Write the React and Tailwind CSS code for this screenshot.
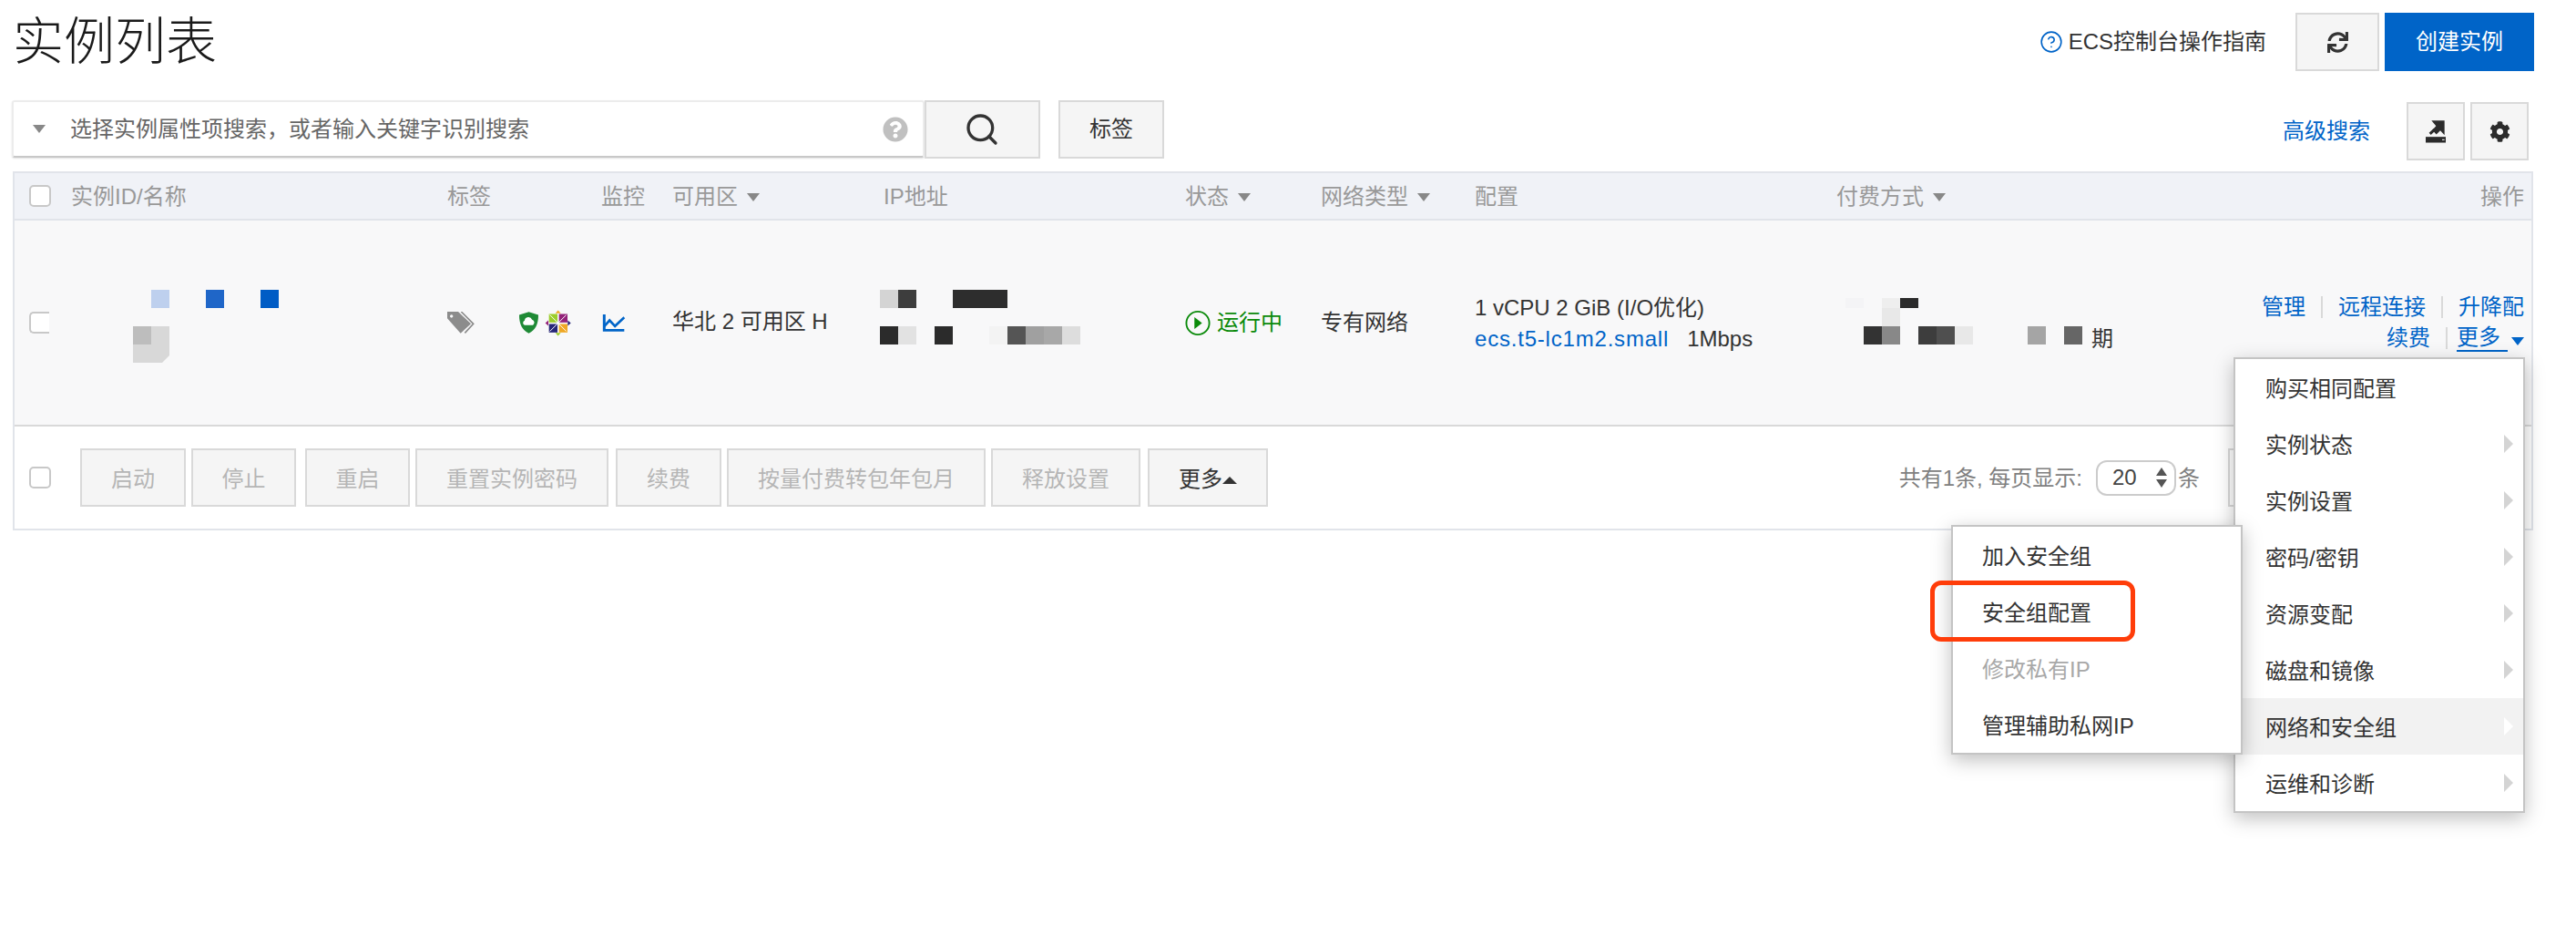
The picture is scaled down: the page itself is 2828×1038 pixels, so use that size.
import React from "react";
import { FaSync, FaCog, FaQuestionCircle } from "react-icons/fa";
import { CircleHelp, Search } from "lucide-react";

const COLS = "grid grid-cols-[62px_413px_169px_78px_232px_331px_149px_169px_397px_1fr_auto] pr-2";

const Down = ({ cls = "border-t-[#888]" }) => (
  <span className={`inline-block w-0 h-0 border-x-[7px] border-x-transparent border-t-[9px] ${cls}`} />
);

const Head = ({ children, sort }) => (
  <div className="flex items-center gap-[10px] pt-[2px] text-[#999]">
    <span>{children}</span>
    {sort && <Down />}
  </div>
);

const Mosaic = ({ rows, cell = "w-5" }) => (
  <div className="flex flex-col">
    {rows.map((r, i) => (
      <div key={i} className={`flex ${r.h || "h-5"}`}>
        {r.c.map((c, j) => (
          <div key={j} className={`${cell} h-full ${c}`} />
        ))}
      </div>
    ))}
  </div>
);

const Btn = ({ children, cls = "", text = "text-[#b5b5b5]" }) => (
  <div className={`h-16 flex items-center justify-center border-2 border-[#d9d9d9] bg-[#f5f5f5] ${text} ${cls}`}>
    {children}
  </div>
);

const Arrow = ({ cls = "border-l-[#d4d4d4]" }) => (
  <span className={`w-0 h-0 border-y-[10px] border-y-transparent border-l-[10px] ${cls}`} />
);

const MenuItem = ({ label, arrow, active, muted, pad = "pl-[33px]" }) => (
  <div className={`h-[62px] flex items-center justify-between ${pad} pr-[11px] ${active ? "bg-[#f2f2f2]" : ""} ${muted ? "text-[#a8a8a8]" : "text-[#333]"}`}>
    <span className="pt-[3px]">{label}</span>
    {arrow && <Arrow cls={active ? "border-l-white" : "border-l-[#d4d4d4]"} />}
  </div>
);

const TagIcon = () => (
  <svg viewBox="30 150 90 72" className="w-[30px] h-6">
    <path fillRule="evenodd" d="M30 150H66L108 190L74 221L30 172ZM44 160a5 5 0 1 0 .1 0Z" fill="#8c8c8c" />
    <path d="M76 150L116 190L88 220" fill="none" stroke="#8c8c8c" strokeWidth="5" />
  </svg>
);

const ShieldIcon = () => (
  <svg viewBox="265 145 70 78" className="w-[23px] h-[26px]">
    <path d="M300 148L332 158C332 190 322 208 300 220C278 208 268 190 268 158Z" fill="#1f8a36" />
    <path d="M286 192a8 8 0 0 1 0-15a13 13 0 0 1 25-3a10 10 0 0 1 3 18Z" fill="#fff" />
  </svg>
);

const CentosIcon = () => (
  <svg viewBox="355 140 90 86" className="w-[30px] h-[29px]">
    <rect x="369" y="153" width="28" height="28" fill="#9ccd2a" />
    <rect x="402" y="153" width="28" height="28" fill="#932279" />
    <rect x="369" y="186" width="28" height="28" fill="#262577" />
    <rect x="402" y="186" width="28" height="28" fill="#efa724" />
    <path d="M399 141L408 151H390Z" fill="#efa724" />
    <path d="M399 225L408 215H390Z" fill="#9ccd2a" />
    <path d="M357 183L367 174V192Z" fill="#932279" />
    <path d="M441 183L431 174V192Z" fill="#262577" />
    <path d="M372 156L426 210M426 156L372 210" stroke="#fff" strokeWidth="3" />
  </svg>
);

const ChartIcon = () => (
  <svg viewBox="535 150 80 70" className="w-[27px] h-[23px]">
    <path d="M544 156V209H611" fill="none" stroke="#0064c8" strokeWidth="9" />
    <path d="M544 196L562 176L580 195L611 166" fill="none" stroke="#0064c8" strokeWidth="8" />
  </svg>
);

const ExportIcon = () => (
  <svg viewBox="96 80 66 74" className="w-[22px] h-[25px]">
    <path d="M115 80H158V128L144 113L131 126L118 112L130 98Z" fill="#2b2b2b" />
    <path d="M110 124L125 110" stroke="#2b2b2b" strokeWidth="9" />
    <rect x="96" y="134" width="66" height="19" fill="#2b2b2b" />
    <rect x="150" y="142" width="8" height="3" fill="#fff" />
  </svg>
);

const nameRows = [
  { c: ["", "bg-[#bed0ee]", "", "", "bg-[#1f66c8]", "", "", "bg-[#005cc5]"] },
  { c: [] },
  { c: ["bg-[#bdbdbd]", "bg-[#d8d8d8]"] },
  { c: ["bg-[#d8d8d8]", "bg-[#d8d8d8] [clip-path:polygon(0_0,100%_0,100%_60%,60%_100%,0_100%)]"] },
];
const ipRows = [
  { c: ["bg-[#d4d4d4]", "bg-[#3d3d3d]", "", "", "bg-[#2d2d2d]", "bg-[#2d2d2d]", "bg-[#2d2d2d]"] },
  { c: [] },
  { c: ["bg-[#2b2b2b]", "bg-[#e2e2e2]", "", "bg-[#2b2b2b]", "", "", "bg-[#f3f3f3]", "bg-[#555]", "bg-[#a0a0a0]", "bg-[#a8a8a8]", "bg-[#ddd]"] },
];
const payTop = [
  { h: "h-[11px]", c: ["bg-[#f4f4f6]", "", "bg-[#eeeeee]", "bg-[#2b2b2b]"] },
  { c: ["", "", "bg-[#e8e8e8]"] },
];
const payBottom = ["", "bg-[#333]", "bg-[#888]", "", "bg-[#3d3d3d]", "bg-[#4f4f4f]", "bg-[#e8e8e8]", "", "", "", "bg-[#a5a5a5]", "", "bg-[#666]"];

const footerBtns = [
  ["启动", "w-[116px]"],
  ["停止", "w-[115px] ml-[6px]"],
  ["重启", "w-[115px] ml-[10px]"],
  ["重置实例密码", "w-[212px] ml-[6px]"],
  ["续费", "w-[116px] ml-2"],
  ["按量付费转包年包月", "w-[284px] ml-[6px]"],
  ["释放设置", "w-[164px] ml-[6px]"],
];

export default function App() {
  return (
    <div className="relative w-[2828px] h-[1038px] overflow-hidden bg-white text-[24px] leading-[34px] text-[#333] font-['Liberation_Sans','Noto_Sans_CJK_SC',sans-serif]">
      {/* header */}
      <div className="flex items-center pt-[14px] pl-[14px] pr-[46px]">
        <h1 className="flex-1 text-[56px] leading-[64px] font-light text-[#1a1a1a]">实例列表</h1>
        <div className="flex items-center gap-[6px] mr-8">
          <CircleHelp size={26} strokeWidth={1.5} className="text-[#0064c8]" />
          <span>ECS控制台操作指南</span>
        </div>
        <Btn cls="w-[92px]" text="text-[#333]"><FaSync size={23} /></Btn>
        <div className="ml-[6px] w-[164px] h-16 flex items-center justify-center bg-[#0064c8] text-white">创建实例</div>
      </div>

      {/* toolbar */}
      <div className="flex items-start mt-8 pl-[13px] pr-[52px] h-[66px]">
        <div className="w-[1002px] h-[63px] flex items-center border-2 border-[#ececec] border-b-[#c8c8c8] rounded-[3px] pl-[21px] pr-4 shadow-[0_1px_2px_rgba(0,0,0,0.12)]">
          <Down />
          <span className="ml-[27px] flex-1 text-[#666]">选择实例属性项搜索，或者输入关键字识别搜索</span>
          <FaQuestionCircle size={28} className="text-[#c0c0c0]" />
        </div>
        <Btn cls="w-[127px] pr-[2px]" text="text-[#333]"><Search size={40} strokeWidth={2} /></Btn>
        <Btn cls="w-[116px] ml-5" text="text-[#333]">标签</Btn>
        <div className="ml-auto flex items-center pt-[2px]">
          <span className="text-[#0064c8] mr-10">高级搜索</span>
          <Btn cls="w-16" text="text-[#2b2b2b]"><ExportIcon /></Btn>
          <Btn cls="w-16 ml-[6px]" text="text-[#2b2b2b]"><FaCog size={23} /></Btn>
        </div>
      </div>

      {/* table */}
      <div className="mt-3 ml-[14px] w-[2767px] h-[394px] border-2 border-[#e1e4ea]">
        <div className={`${COLS} items-center h-[52px] bg-[#f0f2f7] border-b-2 border-[#e1e4ea]`}>
          <div className="pl-4"><div className="w-6 h-6 rounded-[5px] border-2 border-[#c8c8c8] bg-white" /></div>
          <Head>实例ID/名称</Head>
          <Head>标签</Head>
          <Head>监控</Head>
          <Head sort>可用区</Head>
          <Head>IP地址</Head>
          <Head sort>状态</Head>
          <Head sort>网络类型</Head>
          <Head>配置</Head>
          <Head sort>付费方式</Head>
          <Head>操作</Head>
        </div>

        <div className={`${COLS} items-center h-[226px] bg-[#f8f8f9] border-b-2 border-[#d9d9d9]`}>
          <div className="pl-4"><div className="w-[22px] h-6 rounded-l-[5px] border-2 border-r-0 border-[#c8c8c8] bg-white" /></div>
          <div className="pl-[68px] pt-2"><Mosaic rows={nameRows} /></div>
          <div className="flex items-center"><TagIcon /><span className="ml-[48px]"><ShieldIcon /></span><span className="ml-[6px]"><CentosIcon /></span></div>
          <div><ChartIcon /></div>
          <div className="pb-[2px]">华北 2 可用区 H</div>
          <div className="-ml-1 pb-3"><Mosaic rows={ipRows} /></div>
          <div className="flex items-center gap-[7px] text-[#0a8a0a]">
            <svg viewBox="0 0 30 30" className="w-[28px] h-[29px]">
              <circle cx="15" cy="15" r="13.5" fill="none" stroke="#0a8a0a" strokeWidth="2" />
              <path d="M11 8L20 15L11 22Z" fill="#0a8a0a" />
            </svg>
            <span>运行中</span>
          </div>
          <div>专有网络</div>
          <div className="pt-[2px]">
            <div>1 vCPU 2 GiB (I/O优化)</div>
            <div className="flex"><span className="text-[#0064c8] tracking-[0.8px]">ecs.t5-lc1m2.small</span><span className="ml-5">1Mbps</span></div>
          </div>
          <div className="pl-[10px] pb-[3px]">
            <Mosaic rows={payTop} />
            <div className="flex items-center h-5">
              {payBottom.map((c, i) => <div key={i} className={`w-5 h-5 ${c}`} />)}
              <span className="ml-[10px] mt-2">期</span>
            </div>
          </div>
          <div className="text-[#0064c8]">
            <div className="flex items-center justify-end gap-[17px]">
              <span>管理</span><span className="w-[2px] h-6 bg-[#d9d9d9]" />
              <span>远程连接</span><span className="w-[2px] h-6 bg-[#d9d9d9]" />
              <span>升降配</span>
            </div>
            <div className="flex items-center justify-end">
              <span>续费</span>
              <span className="w-[2px] h-6 bg-[#d9d9d9] ml-[17px] mr-[10px]" />
              <span className="border-b-2 border-[#0064c8] leading-[28px] pr-2">更多</span>
              <span className="ml-1"><Down cls="border-t-[#0064c8]" /></span>
            </div>
          </div>
        </div>

        <div className="h-[112px] flex items-center pl-4">
          <div className="w-6 h-6 rounded-[5px] border-2 border-[#c8c8c8] bg-white mr-8" />
          {footerBtns.map(([t, w]) => <Btn key={t} cls={w}><span className="pt-[3px]">{t}</span></Btn>)}
          <Btn cls="w-[132px] ml-2" text="text-[#333]">
            <span className="pt-[3px]">更多</span>
            <span className="w-0 h-0 mt-[5px] border-x-[8px] border-x-transparent border-b-[8px] border-b-[#333]" />
          </Btn>
          <div className="ml-auto flex items-center text-[#808080]">
            <span className="pt-[2px]">共有1条, 每页显示:</span>
            <div className="ml-[15px] w-[88px] h-[39px] flex items-center justify-between pl-4 pr-2 border-2 border-[#ccc] rounded-xl text-[#444]">
              <span>20</span>
              <span className="flex flex-col gap-[4px]">
                <span className="w-0 h-0 border-x-[6px] border-x-transparent border-b-[9px] border-b-[#555]" />
                <span className="w-0 h-0 border-x-[6px] border-x-transparent border-t-[9px] border-t-[#555]" />
              </span>
            </div>
            <span className="ml-[2px] pt-[2px]">条</span>
            <div className="ml-[31px] mr-[133px] w-[200px] h-16 border-2 border-[#d9d9d9]" />
          </div>
        </div>
      </div>

      {/* menus */}
      <div className="absolute left-[2452px] top-[392px] w-[320px] border-2 border-[#c4c4c4] bg-white shadow-[0_6px_20px_rgba(0,0,0,0.25)]">
        <MenuItem label="购买相同配置" />
        <MenuItem label="实例状态" arrow />
        <MenuItem label="实例设置" arrow />
        <MenuItem label="密码/密钥" arrow />
        <MenuItem label="资源变配" arrow />
        <MenuItem label="磁盘和镜像" arrow />
        <MenuItem label="网络和安全组" arrow active />
        <MenuItem label="运维和诊断" arrow />
      </div>
      <div className="absolute left-[2142px] top-[576px] w-[320px] border-2 border-[#c4c4c4] bg-white shadow-[0_6px_20px_rgba(0,0,0,0.25)]">
        <MenuItem pad="pl-8" label="加入安全组" />
        <MenuItem pad="pl-8" label="安全组配置" />
        <MenuItem pad="pl-8" label="修改私有IP" muted />
        <MenuItem pad="pl-8" label="管理辅助私网IP" />
      </div>
      <div className="absolute left-[2119px] top-[637px] w-[225px] h-[67px] border-[5px] border-[#ff3d0a] rounded-xl" />
    </div>
  );
}
